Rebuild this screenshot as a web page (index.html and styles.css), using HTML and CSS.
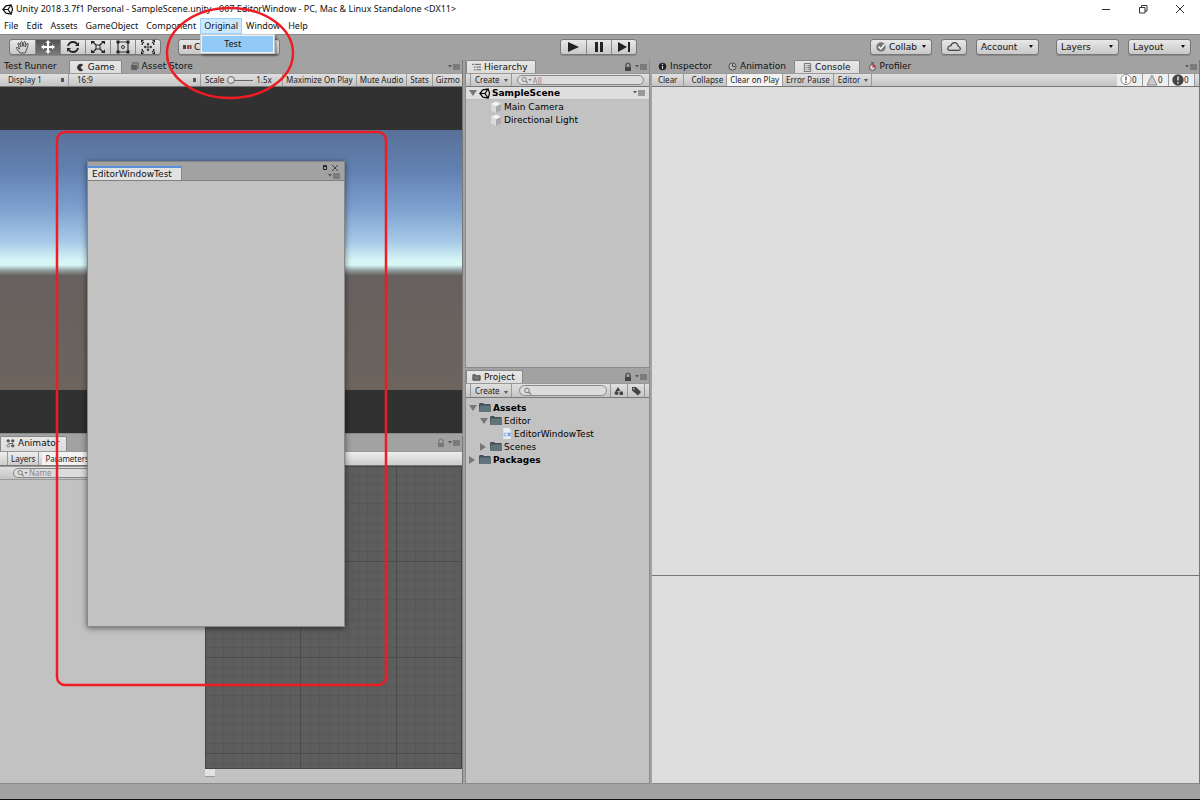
FILE: index.html
```html
<!DOCTYPE html>
<html lang="en">
<head>
<meta charset="utf-8">
<title>Unity 2018.3.7f1 Personal</title>
<link rel="stylesheet" href="styles.css">
</head>
<body>
<svg class="defs" aria-hidden="true">
  <symbol id="unity" viewBox="0 0 24 24"><path d="M2 12 8.500 4 20 2l3 9-3 11-11.500-2zM2 12h11m0 0 7-10m-7 10 7 10" fill="none" stroke="currentColor" stroke-width="2.600"/></symbol>
  <symbol id="lock" viewBox="0 0 8 10"><path d="M2 5V3a2 2 0 0 1 4 0v2" fill="none" stroke="currentColor" stroke-width="1.200"/><path d="M1 5h6v4H1z" fill="currentColor"/></symbol>
  <symbol id="opts" viewBox="0 0 12 8"><path d="M0 2h4L2 4.500z" fill="currentColor"/><path d="M5 2h7M5 4h7M5 6h7" stroke="currentColor" stroke-width="1.200"/></symbol>
  <symbol id="cube" viewBox="0 0 12 12"><path d="M6 0.500 11 3 6 5.500 1 3z" fill="#f4f4f4"/><path d="M1 3l5 2.500V12L1 9.200z" fill="#dadada"/><path d="M11 3 6 5.500V12l5-2.800z" fill="#aaa"/></symbol>
  <symbol id="folder" viewBox="0 0 12 9"><path d="M0 1.500Q0 0 1 0h3l1 1h6.500v8H0z" fill="#435158"/><path d="M1 2.500h11V9H0z" fill="#61747c"/></symbol>
  <symbol id="search" viewBox="0 0 12 8"><circle cx="3.500" cy="3.500" r="2.300" fill="none" stroke="currentColor"/><path d="M5.200 5.200 7.500 7.500" stroke="currentColor" stroke-width="1.200"/><path d="M8 3h3.500L9.800 5z" fill="currentColor"/></symbol>
</svg>

<header class="titlebar">
  <svg class="logo"><use href="#unity"/></svg>
  <span>Unity 2018.3.7f1 Personal - SampleScene.unity - 007 EditorWindow - PC, Mac &amp; Linux Standalone &lt;DX11&gt;</span>
  <div class="caption-buttons">
    <button aria-label="Minimize"><svg viewBox="0 0 10 10"><path d="M1 5.500h8"/></svg></button>
    <button aria-label="Restore"><svg viewBox="0 0 10 10"><path d="M1.500 3.500h5.500V9H1.500zM3.500 3.500v-2H9V7H7"/></svg></button>
    <button aria-label="Close"><svg viewBox="0 0 10 10"><path d="M1 1l8 8M9 1 1 9"/></svg></button>
  </div>
</header>
<nav class="menubar">
  <button>File</button><button>Edit</button><button>Assets</button><button>GameObject</button><button>Component</button>
  <div class="menu-open"><button class="active">Original</button><div class="popup"><button>Test</button></div></div>
  <button>Window</button><button>Help</button>
</nav>

<div class="toolbar">
  <div class="tool-left">
    <div class="group tools">
      <button aria-label="Hand"><svg viewBox="0 0 16 14"><path d="M5 13 1.500 8.500q-.5-1.500 1-1L4.500 9 3 4q0-1.500 1.200-.8L6 7 5.700 2q.8-1.500 1.500 0L8 6.500 9 2q1-1.200 1.500.2L10 7l2-3.500q1.500-.5 1.200 1L11.500 10 10 13z" fill="none" stroke="#444" stroke-width=".9"/></svg></button>
      <button class="on" aria-label="Move"><svg viewBox="0 0 16 14"><path d="M8 0l2.500 3H9v3h3V4.500L15 7l-3 2.500V8H9v3h1.500L8 14l-2.500-3H7V8H4v1.500L1 7l3-2.500V6h3V3H5.500z" fill="#fff"/></svg></button>
      <button aria-label="Rotate"><svg viewBox="0 0 16 14"><path d="M3 6q1-4 5-4 3 0 4 2M13 8q-1 4-5 4-3 0-4-2" fill="none" stroke="#222" stroke-width="1.800"/><path d="M14 2v4h-4zM2 12V8h4z" fill="#222"/></svg></button>
      <button aria-label="Scale"><svg viewBox="0 0 16 14"><path d="M6 5h4v4H6z" fill="none" stroke="#222"/><path d="M6 5 3 2m7 3 3-3M6 9l-3 3m7-3 3 3" stroke="#222" stroke-width="1.200"/><path d="M1 1h4L1 4.500zM15 1h-4l4 3.500zM1 13h4L1 9.500zM15 13h-4l4-3.500z" fill="#222"/></svg></button>
      <button aria-label="Rect"><svg viewBox="0 0 16 14"><path d="M3 2h10v10H3z" fill="none" stroke="#333" stroke-width="1.200"/><path d="M1.500.5h3v3h-3zM11.500.5h3v3h-3zM1.500 10.500h3v3h-3zM11.500 10.500h3v3h-3z" fill="#222"/><circle cx="8" cy="7" r="1.500" fill="none" stroke="#333"/></svg></button>
      <button aria-label="Transform"><svg viewBox="0 0 16 14"><path d="M8 3.500v7M4.500 7h7M8 3 7 4.500h2zM8 11l-1-1.500h2zM4 7l1.500-1v2zM12 7l-1.500-1v2z" stroke="#333" stroke-width=".8" fill="#333"/><path d="M2 5q0-2 2-3m8 0q2 1 2 3M2 9q0 2 2 3m8 0q2-1 2-3" fill="none" stroke="#222" stroke-width="1.300"/><path d="M1 0h3L1 3zM15 0h-3l3 3zM1 14h3l-3-3zM15 14h-3l3-3z" fill="#222"/></svg></button>
    </div>
    <div class="group pivots">
      <button aria-label="Center"><svg viewBox="0 0 9 8"><path d="M0 2h3v4H0z" fill="#444"/><path d="M4 2h2v4H4z" fill="#c33"/><path d="M6.500 2h2v4h-2z" fill="#555"/></svg>C</button><button class="local" aria-label="Local">l</button>
    </div>
  </div>
  <div class="group play">
    <button aria-label="Play"><svg viewBox="0 0 16 14"><path d="M3 2l11 5-11 5z"/></svg></button>
    <button aria-label="Pause"><svg viewBox="0 0 16 14"><path d="M4 2h3v10H4zM9 2h3v10H9z"/></svg></button>
    <button aria-label="Step"><svg viewBox="0 0 16 14"><path d="M2 2l9 5-9 5zM12 2h2v10h-2z"/></svg></button>
  </div>
  <div class="tool-right">
    <button class="pill drop"><svg class="check" viewBox="0 0 10 10"><circle cx="5" cy="5" r="4.700" fill="#777"/><path d="M2.500 4.500 4.700 7 8.500 2.500" fill="none" stroke="#fff" stroke-width="1.400"/></svg>Collab</button>
    <button class="pill cloud" aria-label="Services"><svg viewBox="0 0 14 10"><path d="M3 8.500Q.8 8 1.500 6 2 4.500 4 4.500 5 1.500 7.500 1.500T11 5q2 .5 1.700 2.500Q12.500 8.500 11 8.500z" fill="none" stroke="#444" stroke-width="1.100"/></svg></button>
    <button class="pill drop wide">Account</button>
    <button class="pill drop wide apart">Layers</button>
    <button class="pill drop wide">Layout</button>
  </div>
</div>

<main class="workspace">
  <div class="column left">
    <section class="panel game">
      <div class="tabs">
        <button class="tab flat">Test Runner</button>
        <button class="tab on"><svg viewBox="0 0 10 10"><path d="M8 2A4 4 0 1 0 8 8L5 5z" fill="#333"/></svg>Game</button>
        <button class="tab"><svg viewBox="0 0 10 10"><path d="M1 3h7v6H1z" fill="#666"/><path d="M3 3V1h6v6H8M3 5h4M3 7h4" fill="none" stroke="#555"/></svg>Asset Store</button>
        <div class="tab-end"><svg class="opts"><use href="#opts"/></svg></div>
      </div>
      <div class="bar">
        <select class="display" aria-label="Display"><option>Display 1</option></select>
        <select class="aspect" aria-label="Aspect"><option>16:9</option></select>
        <label class="scale">Scale <input type="range" min="1" max="10" value="1"> 1.5x</label>
        <button>Maximize On Play</button><button>Mute Audio</button><button>Stats</button><button class="clip">Gizmo</button>
      </div>
      <div class="view"><div class="sky"></div></div>
    </section>
    <section class="panel animator">
      <div class="tabs tall">
        <button class="tab on"><svg viewBox="0 0 10 10"><g fill="#555"><circle cx="2.500" cy="2" r="1.800"/><circle cx="7.500" cy="2" r="1.800"/><circle cx="7.500" cy="7.500" r="1.800"/></g><circle cx="2.500" cy="7.500" r="1.500" fill="none" stroke="#777"/><path d="M3 5h5" stroke="#555"/></svg>Animator</button>
        <div class="tab-end"><svg class="lock faint"><use href="#lock"/></svg><svg class="opts"><use href="#opts"/></svg></div>
      </div>
      <div class="bar light"><span class="lead"></span><button>Layers</button><button class="lit">Parameters</button></div>
      <div class="animator-body">
        <div class="params"><div class="bar"><label class="search"><svg><use href="#search"/></svg><input placeholder="Name" aria-label="Name"></label></div></div>
        <div class="graph"><div class="nodes"></div><div class="graph-foot"><span></span></div></div>
      </div>
    </section>
  </div>

  <div class="column middle">
    <section class="panel hierarchy">
      <div class="tabs">
        <button class="tab on"><svg viewBox="0 0 10 10"><path d="M0 1.500h2M3 1.500h7M2 4.500h2M5 4.500h5M2 7.500h2M5 7.500h5" stroke="#555"/></svg>Hierarchy</button>
        <div class="tab-end"><svg class="lock"><use href="#lock"/></svg><svg class="opts"><use href="#opts"/></svg></div>
      </div>
      <div class="bar"><span class="stub"></span><button class="create">Create</button><label class="search"><svg><use href="#search"/></svg><input placeholder="All" aria-label="Search hierarchy"></label></div>
      <ul class="tree">
        <li class="scene"><i class="open"></i><svg class="logo"><use href="#unity"/></svg><b>SampleScene</b><svg class="opts"><use href="#opts"/></svg></li>
        <li class="lv2"><svg class="cube"><use href="#cube"/></svg>Main Camera</li>
        <li class="lv2"><svg class="cube"><use href="#cube"/></svg>Directional Light</li>
      </ul>
    </section>
    <section class="panel project">
      <div class="tabs">
        <button class="tab on"><svg viewBox="0 0 10 10"><path d="M1 2h3l1 1h4v5H1z" fill="#777" stroke="#444"/></svg>Project</button>
        <div class="tab-end"><svg class="lock"><use href="#lock"/></svg><svg class="opts"><use href="#opts"/></svg></div>
      </div>
      <div class="bar"><span class="stub"></span><button class="create">Create</button><label class="search"><svg viewBox="0 0 11 8"><circle cx="4" cy="3.500" r="2.300" fill="none" stroke="currentColor"/><path d="M5.700 5.200 8 7.500" stroke="currentColor" stroke-width="1.200"/></svg><input aria-label="Search project"></label>
        <button class="icon" aria-label="Filter by type"><svg viewBox="0 0 10 10"><path d="M4 1l2.500 4H1.500z" fill="#444"/><circle cx="2.500" cy="7" r="2" fill="#444"/><path d="M5.500 5.500H9V9H5.500z" fill="#444"/></svg></button>
        <button class="icon" aria-label="Filter by label"><svg viewBox="0 0 10 10"><path d="M1 1h4l5 5-3 3.500-6-5z" fill="#444"/><circle cx="2.800" cy="2.800" r=".8" fill="#ddd"/></svg></button>
        <span class="stub end"></span>
      </div>
      <ul class="tree padded">
        <li><i class="open"></i><svg class="folder"><use href="#folder"/></svg><b>Assets</b></li>
        <li class="lv1"><i class="open"></i><svg class="folder"><use href="#folder"/></svg>Editor</li>
        <li class="lv3"><svg class="script" viewBox="0 0 10 12"><path d="M1 0h6l2 2v10H1z" fill="#e8eef4"/><path d="M4.500 5.500Q2.500 4.500 2 7t2.500 1.500M5.500 6h3.500M5.500 8h3.500M6.500 5v4M8 5v4" fill="none" stroke="#5b8fd8" stroke-width=".8"/></svg>EditorWindowTest</li>
        <li class="lv1"><i></i><svg class="folder"><use href="#folder"/></svg>Scenes</li>
        <li><i></i><svg class="folder"><use href="#folder"/></svg><b>Packages</b></li>
      </ul>
    </section>
  </div>

  <section class="panel console">
    <div class="tabs">
      <button class="tab"><svg viewBox="0 0 10 10"><circle cx="5" cy="5" r="4.200" fill="#222"/><path d="M5 2v1.200M5 4.200v3.500" stroke="#ccc" stroke-width="1.400"/></svg>Inspector</button>
      <button class="tab"><svg viewBox="0 0 10 10"><circle cx="5" cy="5" r="4" fill="#bbb" stroke="#444"/><path d="M5 2v3h3" fill="none" stroke="#333"/></svg>Animation</button>
      <button class="tab on"><svg viewBox="0 0 10 10"><path d="M1.500.5h7v9h-7z" fill="#ddd" stroke="#666"/><path d="M3 3h1M5 3h3M3 5h1M5 5h3M3 7h1M5 7h3" stroke="#666"/></svg>Console</button>
      <button class="tab"><svg viewBox="0 0 10 10"><circle cx="5" cy="6" r="3.300" fill="#ddd" stroke="#444"/><path d="M5 6V3a3 3 0 0 1 3 3z" fill="#d23"/><path d="M3.500 1h3" stroke="#444" stroke-width="1.400"/></svg>Profiler</button>
      <div class="tab-end"><svg class="opts"><use href="#opts"/></svg></div>
    </div>
    <div class="bar">
      <button class="first">Clear</button><button class="second">Collapse</button><button class="lit">Clear on Play</button><button>Error Pause</button><button class="create">Editor</button>
      <div class="counts">
        <button><svg viewBox="0 0 12 12"><circle cx="6" cy="5.500" r="5" fill="#fff" stroke="#888"/><path d="M6 2.500v4M6 7.500V9" stroke="#555" stroke-width="1.300"/></svg>0</button>
        <button><svg viewBox="0 0 12 12"><path d="M6 1l5 10H1z" fill="#ccc" stroke="#888"/></svg>0</button>
        <button><svg viewBox="0 0 12 12"><circle cx="6" cy="6" r="5.700" fill="#444"/><path d="M6 2.500v4M6 8v1.500" stroke="#ddd" stroke-width="1.600"/></svg>0</button>
      </div>
    </div>
    <div class="log"></div>
    <div class="detail"></div>
  </section>
</main>
<footer class="status"></footer>

<div class="float-window">
  <div class="float-head">
    <button class="float-tab">EditorWindowTest</button>
    <div class="float-controls">
      <svg viewBox="0 0 18 8"><path d="M1.500 2h3v3.500h-3z" fill="none" stroke="#222"/><path d="M1 2h4" stroke="#222" stroke-width="1.500"/><path d="M10 1l6 6M16 1l-6 6" stroke="#444"/></svg>
      <svg class="opts"><use href="#opts"/></svg>
    </div>
  </div>
</div>
<svg class="marks" aria-hidden="true"><ellipse cx="230" cy="53" rx="63" ry="45"/><rect x="57" y="132" width="329" height="553" rx="8"/></svg>
</body>
</html>
```
FILE: styles.css
```css
* { box-sizing: border-box; }
body {
  margin: 0;
  height: 100vh;
  display: flex;
  flex-direction: column;
  overflow: hidden;
  position: relative;
  background: #a2a2a2;
  color: #111;
  font: 9px/12px "DejaVu Sans", Verdana, sans-serif;
}
button, select, input { font: inherit; color: inherit; margin: 0; padding: 0; border: 0; background: none; border-radius: 0; white-space: nowrap; }
svg { display: block; flex: none; }
.defs { position: absolute; width: 0; height: 0; }

.titlebar { display: flex; align-items: center; gap: 3px; height: 18px; padding-left: 2px; background: #fff; font: 9px/18px "Noto Sans", sans-serif; }
.logo { width: 11px; height: 11px; }
.caption-buttons { margin-left: auto; display: flex; gap: 27px; padding-right: 15px; }
.caption-buttons button { width: 10px; height: 10px; }
.caption-buttons svg { width: 10px; height: 10px; fill: none; stroke: #333; stroke-width: 1; }
.menubar { display: flex; height: 16px; background: #fff; font: 9px/16px "Noto Sans", sans-serif; }
.menubar button { padding: 0 4px; height: 16px; }
.menu-open { position: relative; }
.menubar .active { background: #cce8ff; box-shadow: inset 0 0 0 1px #99d1ff; }
.popup { position: absolute; z-index: 5; left: 0; top: 16px; width: 75px; padding: 1px; background: #f2f2f2; border: 1px solid #ccc; box-shadow: 2px 2px 2px #0005; }
.menubar .popup button { width: 100%; padding-left: 22px; text-align: left; background: #91c9f7; }

.toolbar { display: grid; grid-template-columns: 1fr auto 1fr; align-items: center; height: 26px; padding: 0 9px 2px; border-top: 1px solid #888; }
.tool-left, .tool-right, .group { display: flex; }
.tool-left { gap: 17px; }
.tool-right { justify-content: flex-end; gap: 9px; }
.group, .pill { border: 1px solid #777; border-radius: 3px; background: linear-gradient(#e8e8e8, #c8c8c8); height: 16px; box-shadow: 0 1px 0 #888; }
.group button { width: 25px; height: 14px; display: flex; align-items: center; justify-content: center; }
.group button + button { border-left: 1px solid #888; }
.group button.on { background: linear-gradient(#555, #777); }
.group svg { width: 16px; height: 14px; }
.group.pivots button { width: 50px; gap: 2px; padding: 0 4px; justify-content: flex-start; }
.group.pivots .local { justify-content: flex-end; }
.group.pivots svg { width: 9px; height: 8px; }
.play { margin-right: 4px; }
.play svg { fill: #222; }
.pill { display: flex; align-items: center; gap: 3px; padding: 0 5px; }
.check { width: 10px; height: 10px; }
.pill.cloud { padding: 0 4px; }
.cloud svg { width: 16px; height: 11px; }
.pill.wide { width: 63px; padding-left: 4px; }
.drop::after { content: ""; margin-left: auto; border: 2px solid transparent; border-top: 3px solid #111; border-bottom: 0; }
.pill.drop:first-child::after { margin-left: 2px; }
.apart { margin-left: 8px; }

.workspace { flex: 1; min-height: 0; display: grid; grid-template-columns: 463fr 185fr 548fr; column-gap: 2px; }
.column { display: flex; flex-direction: column; gap: 2px; min-width: 0; min-height: 0; }
.panel { display: flex; flex-direction: column; min-width: 0; min-height: 0; overflow: hidden; background: #c2c2c2; border: 1px solid #8a8a8a; border-top: 0; }
.left .panel, .console { border-left: 0; border-right-color: #777; }
.game { flex: 374; }
.animator { flex: 348; }
.hierarchy { flex: 308; }
.project { flex: 414; }
.tabs { display: flex; height: 13px; flex: none; background: #a2a2a2; }
.tall { height: 15px; }
.tab { display: flex; align-items: center; gap: 3px; padding: 0 8px; line-height: 13px; }
.tab.flat { padding: 0 12px 0 4px; }
.tab.on { background: linear-gradient(#e6e6e6, #dcdcdc); border: 1px solid #888; border-bottom: 0; border-radius: 2px 2px 0 0; }
.tab svg { width: 9px; height: 9px; }
.game .tab.on { padding: 0 6px; }
.middle .tab, .animator .tab { padding: 0 7px 0 5px; }
.tab-end { margin-left: auto; display: flex; gap: 3px; align-items: center; padding-right: 2px; }
.opts { width: 12px; height: 8px; color: #555; }
.lock { width: 8px; height: 10px; color: #444; }
.faint { color: #777; }
.bar { display: flex; align-items: stretch; height: 14px; flex: none; background: linear-gradient(#e0e0e0, #c4c4c4); border-top: 1px solid #999; border-bottom: 1px solid #777; font: 8px/12px "Noto Sans", sans-serif; color: #222; }
.bar button { padding: 0 3px; border-right: 1px solid #999; flex: none; }
.bar select { appearance: none; flex: none; padding-left: 8px; border-right: 1px solid #999; background: linear-gradient(#555, #555) right 4px center / 3px 4px no-repeat; }
.bar .display { width: 69px; }
.bar .aspect { width: 132px; }
.scale { display: flex; flex: none; align-items: center; gap: 3px; padding: 0 4px; width: 82px; border-right: 1px solid #999; }
.scale input { appearance: none; width: 26px; height: 8px; background: linear-gradient(#666, #666) center / 100% 1px no-repeat; }
.scale input::-webkit-slider-thumb { appearance: none; width: 8px; height: 8px; border: 1px solid #666; border-radius: 50%; background: #ddd; }
.bar .clip { border: 0; }
.view { flex: 1; padding: 43px 0; background: #313131; display: flex; }
.sky { flex: 1; background: linear-gradient(#587099 0, #6282b2 16%, #7fa2d1 31%, #a7cae7 43%, #d6f4f6 50%, #d8f7f5 52%, #929d9e 54%, #67605f 56%, #6c645d 100%); }
.light { height: 15px; background: linear-gradient(#eee, #ccc); line-height: 13px; }
.lead { width: 8px; border-right: 1px solid #999; }
.bar .lit { background: #f3f3f3; }
.animator .lit { margin-left: 3px; }
.animator-body { flex: 1; min-height: 0; display: flex; }
.params { width: 205px; }
.params .bar { padding-left: 8px; border-bottom-color: #999; }
.graph { flex: 1; display: flex; flex-direction: column; }
.nodes { flex: 1; border: 1px solid #444; background-color: #5d5d5d; background-image: linear-gradient(to right, #4c4c4c 1px, transparent 1px), linear-gradient(#4c4c4c 1px, transparent 1px), repeating-linear-gradient(to right, #575757 0 1px, transparent 1px 10%), repeating-linear-gradient(#575757 0 1px, transparent 1px 10%); background-size: 96px 96px; background-position: -2px -2px; }
.graph-foot { height: 14px; }
.graph-foot span { display: block; width: 10px; height: 8px; background: #e2e2e2; border-bottom: 1px solid #999; }
.stub { width: 5px; border-right: 1px solid #999; }
.stub.end { border-right: 0; border-left: 1px solid #999; }
.bar .create { padding-left: 4px; }
.create::after { content: ""; display: inline-block; vertical-align: middle; margin-left: 4px; border: 2px solid transparent; border-top: 3px solid #555; border-bottom: 0; }
.search { flex: 1; min-width: 0; display: flex; align-items: center; gap: 1px; margin: 1px 5px; padding: 0 3px; border: 1px solid #888; border-radius: 6px; background: #dcdcdc; color: #777; }
.search svg { width: 11px; height: 8px; }
.search input { flex: 1; min-width: 0; width: 0; height: 9px; line-height: 9px; }
.search input::placeholder { color: #888; }
.project .bar { height: 15px; line-height: 14px; }
.project .search { margin-right: 3px; margin-left: 7px; }
.bar .icon { width: 17px; border-left: 1px solid #999; border-right: 0; }
.icon svg { width: 10px; height: 10px; }

.tree { list-style: none; margin: 0; padding: 0; color: #000; }
.padded { padding-top: 3px; }
.tree li { display: flex; align-items: center; gap: 2px; height: 13px; padding: 0 4px 0 3px; }
.tree i { width: 0; height: 0; border: 4px solid transparent; border-left: 6px solid #777; border-right: 0; margin-right: 2px; }
.tree i.open { border: 4px solid transparent; border-top: 6px solid #777; border-bottom: 0; margin-right: 0; }
.tree .scene { background: #dedede; border-bottom: 1px solid #bbb; }
.scene .opts { margin-left: auto; }
.tree .lv1 { padding-left: 14px; }
.tree .lv2 { padding-left: 24px; }
.tree .lv3 { padding-left: 36px; }
.cube { width: 12px; height: 12px; }
.folder { width: 12px; height: 9px; }
.script { width: 10px; height: 11px; }

.console { background: #dedede; }
.console .tab { padding: 0 8px; }
.console .tab:first-child { padding-left: 6px; }
.console .bar .first { padding: 0 6px; }
.bar .second { margin-left: 4px; }
.counts { margin-left: auto; display: flex; padding-right: 4px; }
.counts button { display: flex; align-items: center; width: 26px; background: #eee; }
.counts svg { width: 12px; height: 12px; }
.log { flex: 489; border-bottom: 1px solid #777; }
.detail { flex: 208; }
.status { height: 16px; flex: none; border-bottom: 1px solid #111; background: #a2a2a2; }

.float-window { position: absolute; left: 87px; top: 161px; width: 258px; height: 466px; background: #c2c2c2; border: 1px solid #888; box-shadow: 0 1px 6px #0008; }
.float-head { display: flex; align-items: flex-end; height: 19px; background: #a2a2a2; border-bottom: 1px solid #808080; }
.float-tab { height: 14px; padding: 0 9px 0 4px; background: #e2e2e2; border-top: 2px solid #5b8fd8; border-right: 1px solid #888; }
.float-controls { margin-left: auto; padding-right: 4px; display: flex; flex-direction: column; align-items: flex-end; }
.float-controls svg:first-child { width: 18px; height: 8px; }
.marks { position: absolute; inset: 0; width: 100%; height: 100%; z-index: 10; pointer-events: none; fill: none; stroke: #ee1c24; stroke-width: 2.500; }
```
